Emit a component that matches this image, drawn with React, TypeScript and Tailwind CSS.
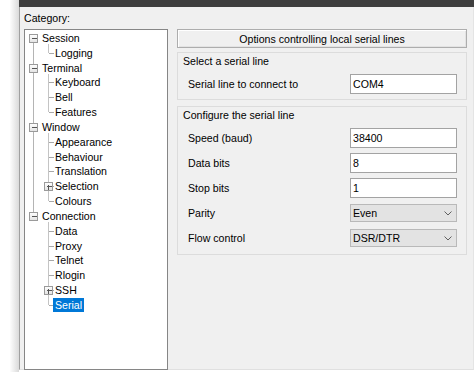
const ROW = 14.83;

type Item = { label: string; level: 0 | 1; box?: "minus" | "plus"; selected?: boolean };

const items: Item[] = [
  { label: "Session", level: 0, box: "minus" },
  { label: "Logging", level: 1 },
  { label: "Terminal", level: 0, box: "minus" },
  { label: "Keyboard", level: 1 },
  { label: "Bell", level: 1 },
  { label: "Features", level: 1 },
  { label: "Window", level: 0, box: "minus" },
  { label: "Appearance", level: 1 },
  { label: "Behaviour", level: 1 },
  { label: "Translation", level: 1 },
  { label: "Selection", level: 1, box: "plus" },
  { label: "Colours", level: 1 },
  { label: "Connection", level: 0, box: "minus" },
  { label: "Data", level: 1 },
  { label: "Proxy", level: 1 },
  { label: "Telnet", level: 1 },
  { label: "Rlogin", level: 1 },
  { label: "SSH", level: 1, box: "plus" },
  { label: "Serial", level: 1, selected: true },
];

const cy = (i: number) => 8 + i * ROW;

const TreeLines = () => {
  const groups: [number, number][] = [
    [0, 1],
    [2, 5],
    [6, 11],
    [12, 18],
  ];
  return (
    <svg className="absolute left-0 top-0" width="142" height="300" shapeRendering="crispEdges">
      <defs>
        <linearGradient id="bx" x1="0" y1="0" x2="0" y2="1">
          <stop offset="0" stopColor="#ffffff" />
          <stop offset="1" stopColor="#e2e2e2" />
        </linearGradient>
      </defs>
      <line x1="8.5" y1={cy(0)} x2="8.5" y2={cy(12)} stroke="#b4b4b4" />
      {groups.map(([p, last]) => (
        <line key={p} x1="23.5" y1={cy(p) + 6} x2="23.5" y2={cy(last)} stroke="#c4c4c4" />
      ))}
      {items.map((it, i) =>
        it.level === 1 ? (
          <line key={i} x1="23.5" y1={Math.round(cy(i)) + 0.5} x2="29" y2={Math.round(cy(i)) + 0.5} stroke="#a8a8a8" />
        ) : null
      )}
      {items.map((it, i) => {
        if (!it.box) return null;
        const x = it.level === 0 ? 8.5 : 23.5;
        const y = Math.round(cy(i)) + 0.5;
        return (
          <g key={"b" + i}>
            <rect x={x - 4} y={y - 4} width="8" height="8" fill="url(#bx)" stroke="#9a9a9a" />
            <line x1={x - 2} y1={y} x2={x + 3} y2={y} stroke="#555" />
            {it.box === "plus" && <line x1={x} y1={y - 2} x2={x} y2={y + 3} stroke="#555" />}
          </g>
        );
      })}
    </svg>
  );
};

const Field = ({ label, value }: { label: string; value: string }) => (
  <div className="flex h-[20px] items-center justify-between">
    <span className="pl-[10px]">{label}</span>
    <div className="mr-[9px] h-[20px] w-[107px] border border-[#a3a3a3] bg-white pl-[2px] pt-[3px] leading-[12px]">
      {value}
    </div>
  </div>
);

const Select = ({ label, value }: { label: string; value: string }) => (
  <div className="flex h-[20px] items-center justify-between">
    <span className="pl-[10px]">{label}</span>
    <div className="mr-[9px] flex h-[18px] w-[107px] items-center justify-between border border-[#b9b9b9] bg-[#e3e3e3] pl-[2px] pr-[4px]">
      <span>{value}</span>
      <svg width="8" height="5" viewBox="0 0 8 5">
        <polyline points="0.5,0.5 4,4 7.5,0.5" fill="none" stroke="#606060" strokeWidth="1" />
      </svg>
    </div>
  </div>
);

export default function App() {
  return (
    <div
      className="flex h-[372px] w-[474px] overflow-hidden bg-white text-[10.6px] leading-[12px] text-black"
      style={{ fontFamily: '"Liberation Sans", Arial, sans-serif' }}
    >
      <div className="h-full w-[19px] bg-gradient-to-r from-white from-50% to-[#dadada]" />
      <div className="flex flex-1 flex-col">
        <div className="h-[7px] bg-[#3e3e3e]" />
        <div className="flex h-[363px] flex-col border-b border-l border-r border-b-[#e0e0e0] border-l-[#a0a0a0] border-r-[#e4e4e4] bg-[#f0f0f0] pl-[4px] pt-[5px]">
          <div>Category:</div>
          <div className="mt-[5px] flex">
            <div className="relative h-[341px] w-[144px] border border-[#868686] bg-white pt-[0.6px]">
              <TreeLines />
              {items.map((it) => (
                <div
                  key={it.label}
                  className={`relative flex h-[14.83px] items-center ${it.level === 0 ? "pl-[15px]" : "pl-[28px]"}`}
                >
                  <span
                    className={`block h-[14px] px-[2px] leading-[14px] ${it.selected ? "bg-[#0078d7] text-white" : ""}`}
                  >
                    {it.label}
                  </span>
                </div>
              ))}
            </div>
            <div className="ml-[9px] flex w-[290px] flex-col">
              <div className="flex h-[19px] items-center justify-center border border-[#adadad] bg-[#f0f0f0] shadow-[inset_1px_1px_0_#ffffff,inset_-1px_-1px_0_#e3e3e3]">
                Options controlling local serial lines
              </div>
              <div className="mt-[4px] h-[48px] border border-[#dcdcdc] pt-[2px]">
                <div className="pl-[5px]">Select a serial line</div>
                <div className="mt-[7px]">
                  <Field label="Serial line to connect to" value="COM4" />
                </div>
              </div>
              <div className="mt-[6px] h-[149px] border border-[#dcdcdc] pt-[2px]">
                <div className="pl-[5px]">Configure the serial line</div>
                <div className="mt-[7px] flex flex-col gap-[5px]">
                  <Field label="Speed (baud)" value="38400" />
                  <Field label="Data bits" value="8" />
                  <Field label="Stop bits" value="1" />
                  <Select label="Parity" value="Even" />
                  <Select label="Flow control" value="DSR/DTR" />
                </div>
              </div>
            </div>
          </div>
        </div>
      </div>
    </div>
  );
}
